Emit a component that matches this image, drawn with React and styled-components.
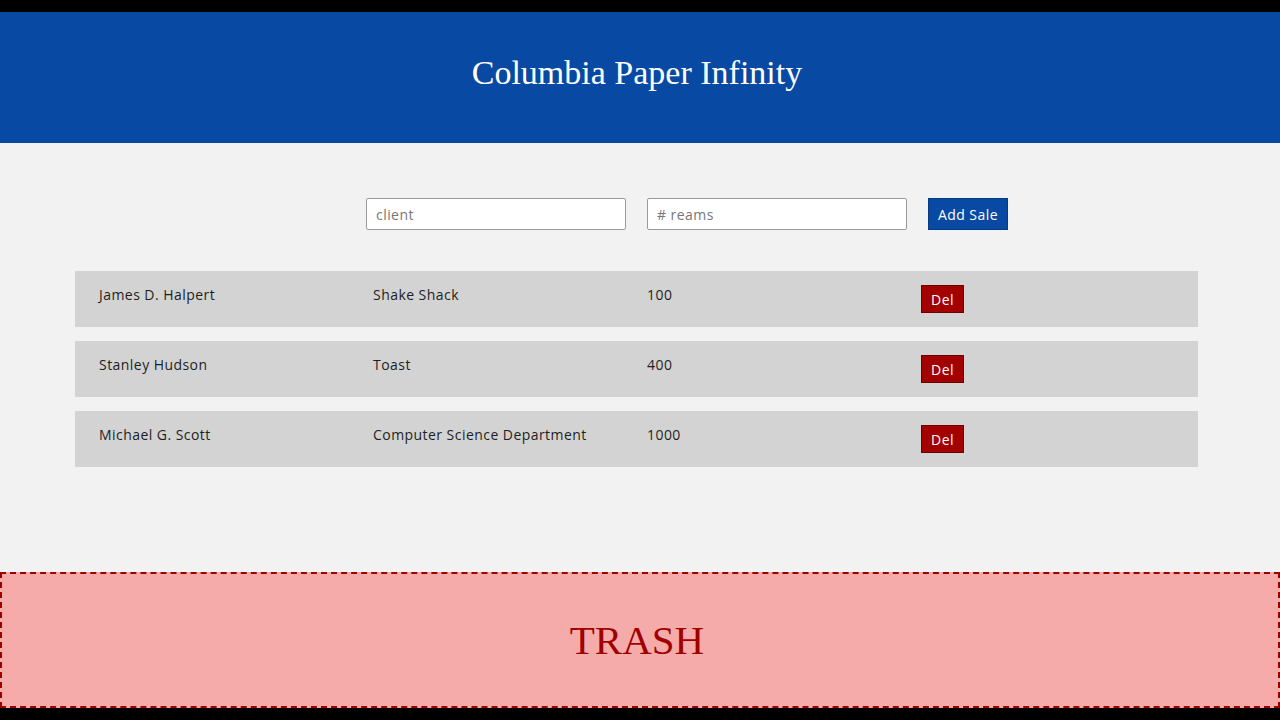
import React from "react";
import styled, { createGlobalStyle } from "styled-components";

const Global = createGlobalStyle`
  html, body { margin: 0; padding: 0; background: #000; }
  * { box-sizing: border-box; }
`;

const Frame = styled.div`
  width: 1280px;
  height: 720px;
  padding: 12px 0;
  background: #000;
  display: flex;
  flex-direction: column;
`;

const Page = styled.div`
  flex: 1;
  display: flex;
  flex-direction: column;
  background: #f2f2f2;
  font-family: "Open Sans", "Noto Sans", sans-serif;
  letter-spacing: 0.45px;
`;

const Header = styled.header`
  height: 131px;
  background: #0849a3;
  display: flex;
  align-items: center;
  justify-content: center;
`;

const Title = styled.h1`
  margin: 0;
  font-family: "Liberation Serif", "Times New Roman", serif;
  font-weight: 400;
  font-size: 34px;
  letter-spacing: 0;
  color: #fff;
  transform: translate(-3px, -5px);
`;

const Main = styled.main`
  flex: 1;
  padding: 55px 82px 0 75px;
  display: flex;
  flex-direction: column;
`;

const Form = styled.form`
  display: flex;
  gap: 21px;
  padding-left: 291px;
  margin-bottom: 41px;
`;

const Input = styled.input`
  width: 260px;
  height: 32px;
  border: 1px solid #9a9a9a;
  border-radius: 2px;
  background: #fff;
  padding: 0 9px;
  font-family: inherit;
  letter-spacing: inherit;
  font-size: 14px;
  color: #333;
  outline: none;
  &::placeholder { color: #777; }
`;

const AddButton = styled.button`
  width: 80px;
  height: 32px;
  border: 1px solid #053a85;
  background: #0849a3;
  color: #fff;
  font-family: inherit;
  letter-spacing: inherit;
  font-size: 14px;
  padding: 0;
  cursor: pointer;
`;

const List = styled.div`
  display: flex;
  flex-direction: column;
  gap: 14px;
`;

const Row = styled.div`
  display: grid;
  grid-template-columns: repeat(4, 274px);
  align-items: start;
  height: 56px;
  padding: 14px 24px;
  background: #d3d3d3;
`;

const Cell = styled.div`
  font-size: 14px;
  color: #1e1e1e;
  line-height: 20px;
`;

const DelButton = styled.button`
  width: 43px;
  height: 28px;
  border: 1px solid #6e0000;
  background: #a30000;
  color: #fff;
  font-family: inherit;
  letter-spacing: inherit;
  font-size: 14px;
  padding: 0;
  cursor: pointer;
`;

const Trash = styled.div`
  height: 136px;
  background: #f6abab;
  border: 2px dashed #9b0000;
  display: flex;
  align-items: center;
  justify-content: center;
  font-family: "Liberation Serif", "Times New Roman", serif;
  font-size: 41px;
  letter-spacing: 0;
  color: #a00000;
  padding-right: 6px;
`;

const sales = [
  { id: 1, seller: "James D. Halpert", client: "Shake Shack", reams: 100 },
  { id: 2, seller: "Stanley Hudson", client: "Toast", reams: 400 },
  { id: 3, seller: "Michael G. Scott", client: "Computer Science Department", reams: 1000 },
];

export default function App() {
  return (
    <>
      <Global />
      <Frame>
        <Page>
          <Header>
            <Title>Columbia Paper Infinity</Title>
          </Header>
          <Main>
            <Form onSubmit={(e) => e.preventDefault()}>
              <Input placeholder="client" />
              <Input placeholder="# reams" />
              <AddButton type="submit">Add Sale</AddButton>
            </Form>
            <List>
              {sales.map((s) => (
                <Row key={s.id}>
                  <Cell>{s.seller}</Cell>
                  <Cell>{s.client}</Cell>
                  <Cell>{s.reams}</Cell>
                  <div>
                    <DelButton>Del</DelButton>
                  </div>
                </Row>
              ))}
            </List>
          </Main>
          <Trash>TRASH</Trash>
        </Page>
      </Frame>
    </>
  );
}
